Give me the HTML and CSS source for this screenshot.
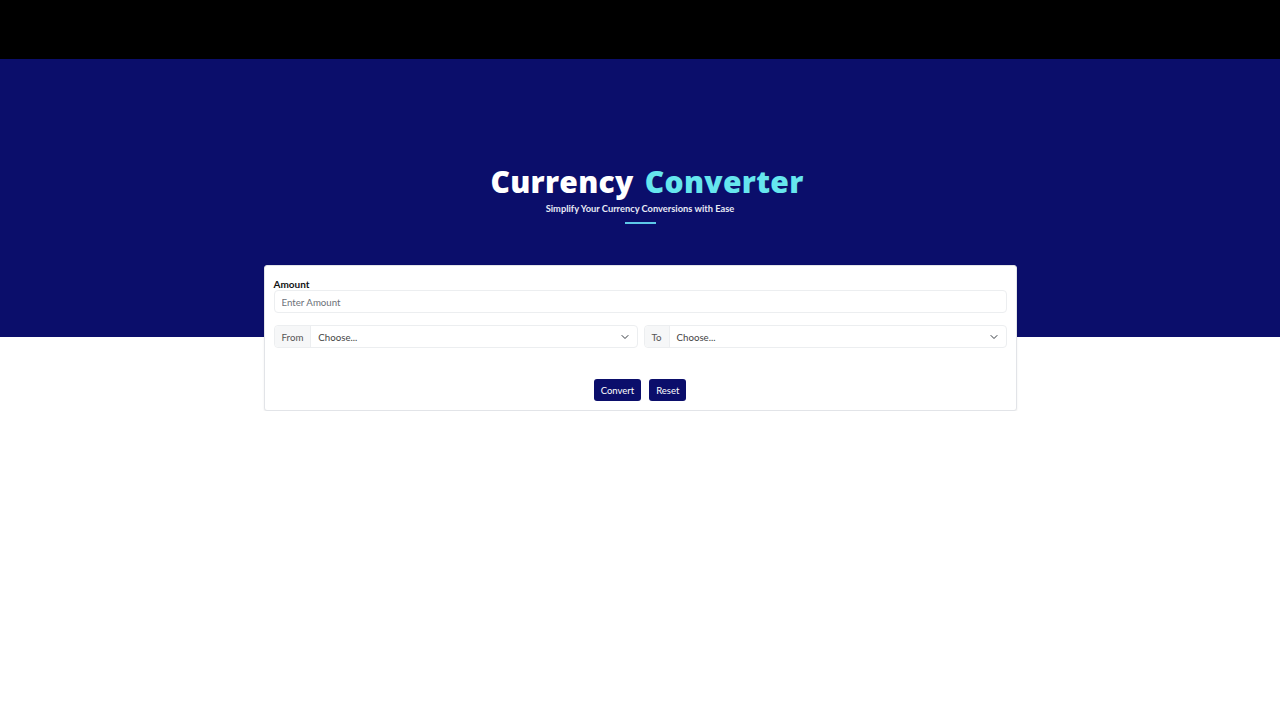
FILE: index.html
```html
<!DOCTYPE html>
<html lang="en">
<head>
<meta charset="utf-8">
<title>Currency Converter</title>
<link rel="stylesheet" href="styles.css">
</head>
<body>
<div class="topbar"></div>
<header class="hero">
  <h1 class="title">Currency <span class="accent">Converter</span></h1>
  <p class="subtitle">Simplify Your Currency Conversions with Ease</p>
  <div class="rule"></div>
</header>
<main class="wrap">
  <section class="card">
    <label class="label" for="amount">Amount</label>
    <input id="amount" class="input" type="text" placeholder="Enter Amount">
    <div class="pairs">
      <div class="group">
        <span class="addon">From</span>
        <div class="select"><span>Choose...</span>
          <svg class="chev" viewBox="0 0 16 16" width="10" height="10"><path d="M2 5l6 6 6-6" fill="none" stroke="#343a40" stroke-width="2" stroke-linecap="round" stroke-linejoin="round"/></svg>
        </div>
      </div>
      <div class="group">
        <span class="addon">To</span>
        <div class="select"><span>Choose...</span>
          <svg class="chev" viewBox="0 0 16 16" width="10" height="10"><path d="M2 5l6 6 6-6" fill="none" stroke="#343a40" stroke-width="2" stroke-linecap="round" stroke-linejoin="round"/></svg>
        </div>
      </div>
    </div>
    <div class="actions">
      <button class="btn">Convert</button>
      <button class="btn">Reset</button>
    </div>
  </section>
</main>
</body>
</html>
```
FILE: styles.css
```css
* { box-sizing: border-box; }
html, body { margin: 0; padding: 0; background: #fff; }
body { font-family: Lato, "Liberation Sans", sans-serif; color: #212529; }
.topbar { height: 59px; background: #000; }
.hero {
  background: #0b0e6b;
  height: 278px;
  display: flex;
  flex-direction: column;
  align-items: center;
  padding-top: 105px;
}
.title {
  margin: 0;
  padding-left: 14px;
  font-family: "Open Sans", sans-serif;
  font-weight: 800;
  font-size: 30px;
  line-height: 36px;
  color: #fff;
  letter-spacing: 0.3px;
  word-spacing: 3px;
}
.accent { color: #66e6ee; }
.subtitle {
  margin: 3px 0 0;
  font-size: 9.3px;
  font-weight: 700;
  color: #e8eaf6;
}
.rule { width: 31px; height: 2px; background: #5ec8e8; margin-top: 8px; }
.wrap { display: flex; justify-content: center; margin-top: -72px; }
.card {
  width: 753px;
  background: #fff;
  border: 1px solid #e2e4e8;
  border-radius: 3px;
  box-shadow: 0 1px 2px rgba(0,0,0,0.08);
  padding: 12px 9px 9px;
}
.label { display: block; font-size: 10px; font-weight: 700; color: #111; margin-bottom: 0; line-height: 12px; }
.input {
  display: block;
  width: 100%;
  height: 23px;
  border: 1px solid #eceef0;
  border-radius: 4px;
  padding: 0 7px;
  font-family: Lato, sans-serif;
  font-size: 9.7px;
  color: #333;
  outline: none;
}
.input::placeholder { color: #6c7178; }
.pairs { display: flex; gap: 6px; margin-top: 12px; }
.group {
  flex: 1;
  display: flex;
  height: 23px;
  border: 1px solid #eceef0;
  border-radius: 4px;
  font-size: 9.7px;
  color: #444;
}
.group:first-child { flex: 0 0 364px; }
.addon {
  display: flex;
  align-items: center;
  padding: 0 7px;
  background: #f6f7f8;
  border-right: 1px solid #eceef0;
  border-radius: 4px 0 0 4px;
  color: #555;
}
.select {
  flex: 1;
  display: flex;
  align-items: center;
  justify-content: space-between;
  padding: 0 8px 0 7px;
  color: #444;
}
.chev { width: 8px; height: 8px; }
.actions { display: flex; justify-content: center; gap: 8px; margin-top: 31px; }
.btn {
  background: #0b0e6b;
  color: #fff;
  border: none;
  border-radius: 3px;
  height: 22px;
  padding: 0 7px;
  font-family: Lato, sans-serif;
  font-size: 9.5px;
}
```
